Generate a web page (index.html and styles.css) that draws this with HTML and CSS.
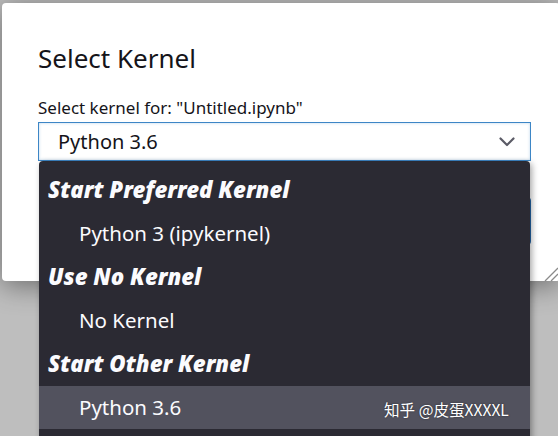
FILE: index.html
```html
<!DOCTYPE html>
<html lang="en">
<head>
<meta charset="utf-8">
<title>Select Kernel</title>
<link rel="stylesheet" href="styles.css">
</head>
<body>
<div class="dialog">
  <h1 class="title">Select Kernel</h1>
  <div class="label">Select kernel for: "Untitled.ipynb"</div>
  <div class="select-wrap">
    <div class="select">
      <span class="select-value">Python 3.6</span>
      <svg class="chevron" width="16" height="10" viewBox="0 0 16 10"><path d="M1.5 1.5 L8 8 L14.5 1.5" fill="none" stroke="#5b5b66" stroke-width="2.2" stroke-linecap="round" stroke-linejoin="round"/></svg>
    </div>
    <ul class="menu">
      <li class="group">Start Preferred Kernel</li>
      <li class="option">Python 3 (ipykernel)</li>
      <li class="group">Use No Kernel</li>
      <li class="option">No Kernel</li>
      <li class="group">Start Other Kernel</li>
      <li class="option selected">Python 3.6</li>
    </ul>
  </div>
  <div class="actions">
    <button class="btn-primary">Select</button>
  </div>
  <svg class="resize" width="16" height="15" viewBox="0 0 16 15"><path d="M2 14 L15 1 M8 14 L15 7" stroke="#8a8a8a" stroke-width="1.3" fill="none"/></svg>
</div>
<div class="watermark">知乎 @皮蛋XXXXL</div>
</body>
</html>
```
FILE: styles.css
```css
html, body {
  margin: 0;
  padding: 0;
}
body {
  width: 558px;
  height: 436px;
  overflow: hidden;
  position: relative;
  background: #bebebe;
  font-family: "Noto Sans", "Open Sans", sans-serif;
  color: #15141a;
}
.dialog {
  position: relative;
  margin: 3px 0 0 2px;
  width: 558px;
  box-sizing: border-box;
  padding: 39px 29px 36px 36px;
  background: #ffffff;
  border-radius: 4px;
  box-shadow: 0 4px 28px rgba(0, 0, 0, 0.45);
}
.title {
  margin: 0;
  font-size: 26px;
  font-weight: 400;
  line-height: 32px;
}
.label {
  margin-top: 23px;
  font-size: 17px;
  line-height: 22px;
}
.select-wrap {
  position: relative;
  margin-top: 3px;
}
.select {
  display: flex;
  align-items: center;
  justify-content: space-between;
  border: 1px solid #3d86c6;
  padding: 2px 15px 1px 19px;
  font-size: 20px;
  line-height: 34px;
  background: #fff;
  box-shadow: inset 0 0 3px rgba(61, 134, 198, 0.35);
}
.chevron {
  display: block;
}
.menu {
  position: absolute;
  z-index: 10;
  top: 100%;
  left: 1px;
  right: 1px;
  margin: 0;
  padding: 7px 0 20px;
  list-style: none;
  background: #2b2a33;
  border-radius: 4px 4px 0 0;
  box-shadow: 2px 2px 6px rgba(0, 0, 0, 0.35);
  color: #fbfbfe;
}
.group {
  height: 43.5px;
  line-height: 43.5px;
  padding-left: 9px;
  font-size: 22.2px;
  font-weight: 900;
  font-style: italic;
}
.option {
  height: 43.5px;
  line-height: 43.5px;
  padding-left: 40px;
  font-size: 20.5px;
}
.option.selected {
  background: #52525e;
}
.actions {
  margin-top: 36px;
  display: flex;
  justify-content: flex-end;
}
.btn-primary {
  height: 48px;
  width: 130px;
  border: none;
  border-radius: 4px;
  background: #2567a8;
  color: #fff;
  font-family: inherit;
  font-size: 18px;
}
.resize {
  position: absolute;
  left: 541px;
  top: 264px;
}
.watermark {
  position: absolute;
  z-index: 20;
  left: 384px;
  top: 399px;
  font-family: "Noto Sans CJK SC", sans-serif;
  font-size: 15.6px;
  line-height: 20px;
  color: #ffffff;
  text-shadow: 0 0 2px rgba(0, 0, 0, 0.5);
  white-space: nowrap;
}
```
